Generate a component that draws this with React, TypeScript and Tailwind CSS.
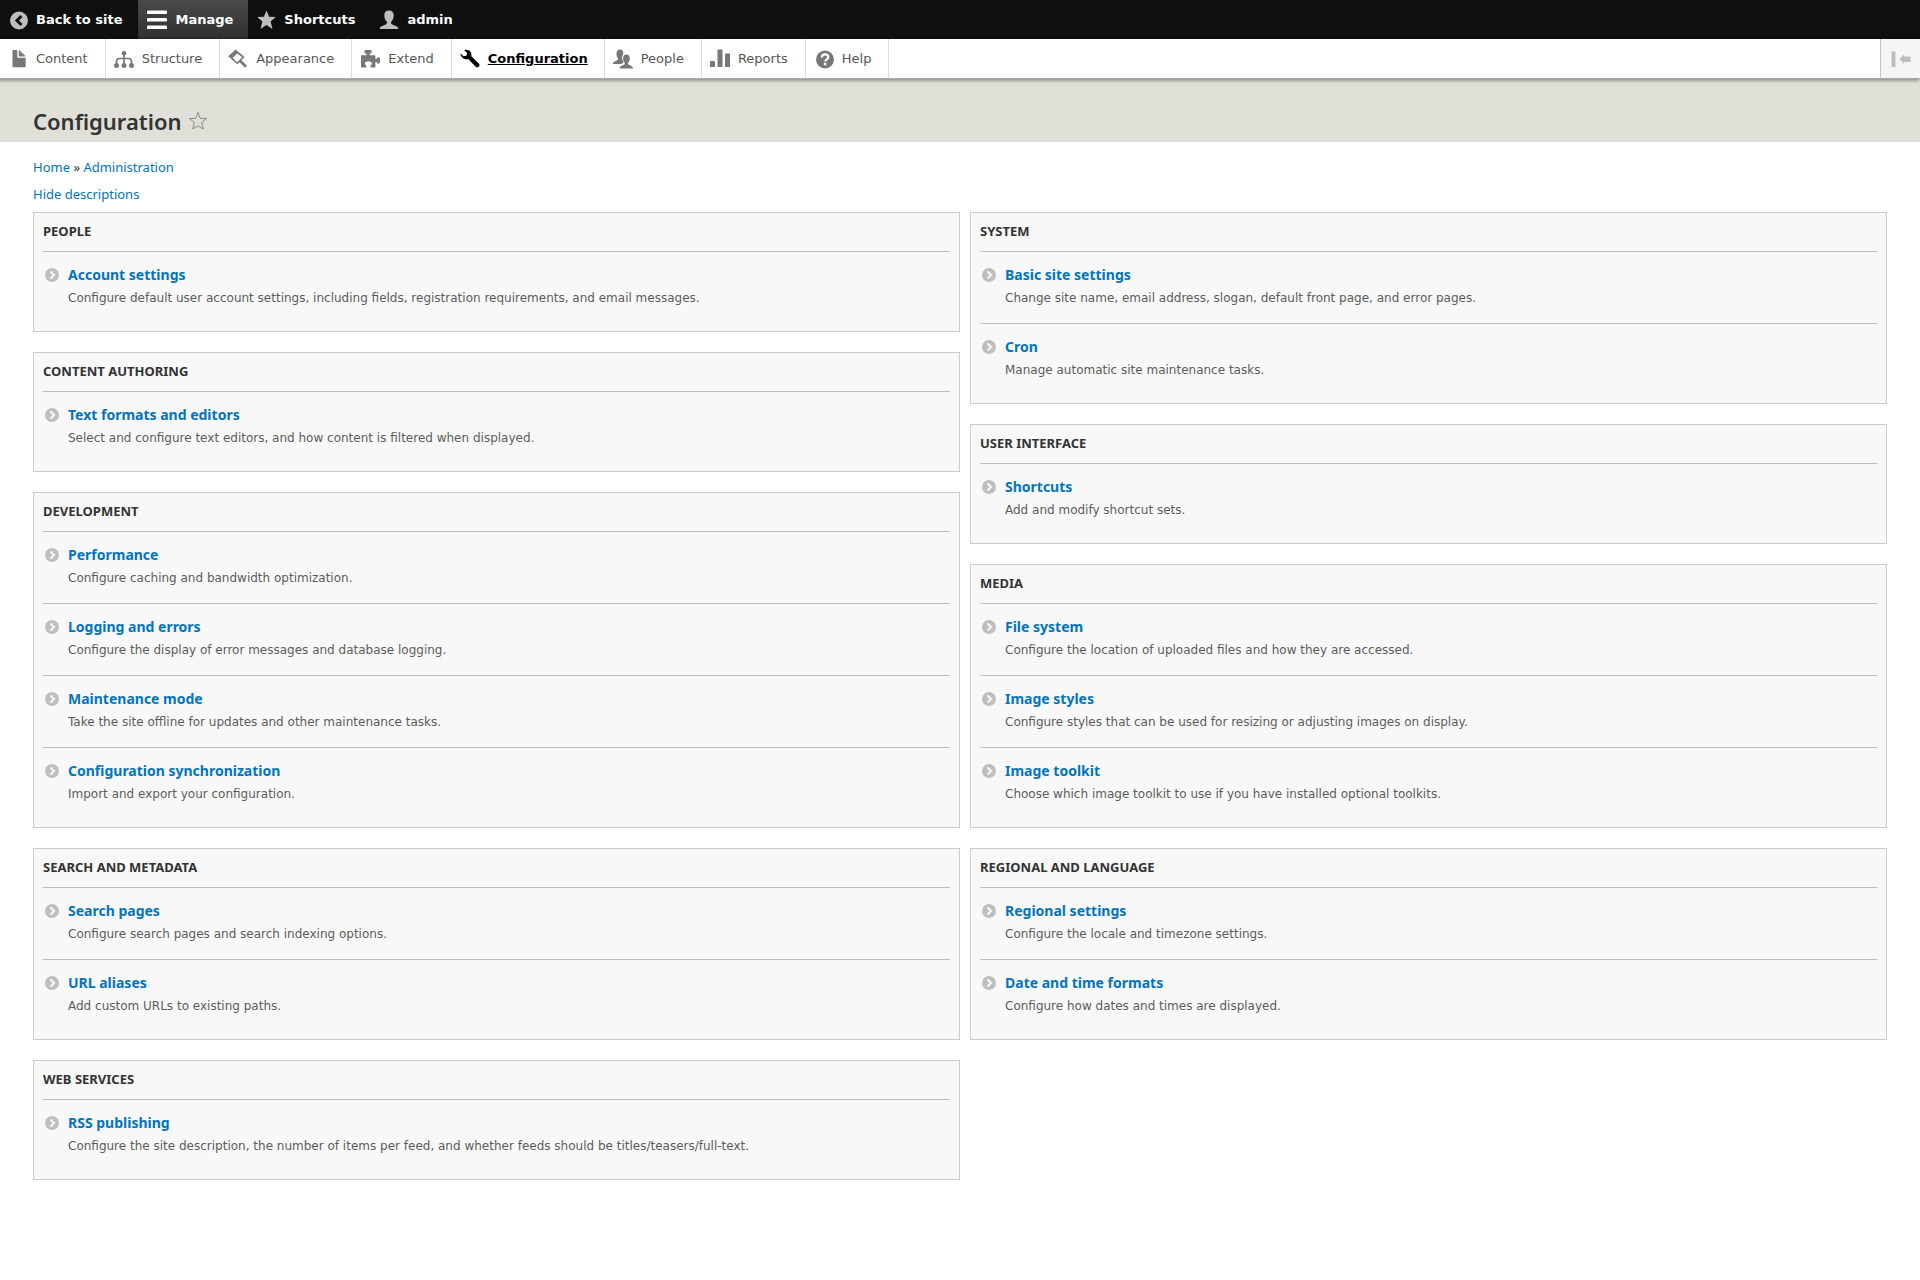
import type { ReactNode } from "react";

type Entry = { title: string; text: string };
type Group = { name: string; entries: Entry[] };

const leftGroups: Group[] = [
  {
    name: "People",
    entries: [
      {
        title: "Account settings",
        text: "Configure default user account settings, including fields, registration requirements, and email messages.",
      },
    ],
  },
  {
    name: "Content authoring",
    entries: [
      {
        title: "Text formats and editors",
        text: "Select and configure text editors, and how content is filtered when displayed.",
      },
    ],
  },
  {
    name: "Development",
    entries: [
      { title: "Performance", text: "Configure caching and bandwidth optimization." },
      { title: "Logging and errors", text: "Configure the display of error messages and database logging." },
      { title: "Maintenance mode", text: "Take the site offline for updates and other maintenance tasks." },
      { title: "Configuration synchronization", text: "Import and export your configuration." },
    ],
  },
  {
    name: "Search and metadata",
    entries: [
      { title: "Search pages", text: "Configure search pages and search indexing options." },
      { title: "URL aliases", text: "Add custom URLs to existing paths." },
    ],
  },
  {
    name: "Web services",
    entries: [
      {
        title: "RSS publishing",
        text: "Configure the site description, the number of items per feed, and whether feeds should be titles/teasers/full-text.",
      },
    ],
  },
];

const rightGroups: Group[] = [
  {
    name: "System",
    entries: [
      {
        title: "Basic site settings",
        text: "Change site name, email address, slogan, default front page, and error pages.",
      },
      { title: "Cron", text: "Manage automatic site maintenance tasks." },
    ],
  },
  {
    name: "User interface",
    entries: [{ title: "Shortcuts", text: "Add and modify shortcut sets." }],
  },
  {
    name: "Media",
    entries: [
      { title: "File system", text: "Configure the location of uploaded files and how they are accessed." },
      {
        title: "Image styles",
        text: "Configure styles that can be used for resizing or adjusting images on display.",
      },
      {
        title: "Image toolkit",
        text: "Choose which image toolkit to use if you have installed optional toolkits.",
      },
    ],
  },
  {
    name: "Regional and language",
    entries: [
      { title: "Regional settings", text: "Configure the locale and timezone settings." },
      { title: "Date and time formats", text: "Configure how dates and times are displayed." },
    ],
  },
];

function Icon({ children }: { children: ReactNode }) {
  return (
    <svg viewBox="0 0 20 20" className="size-5 shrink-0" fill="currentColor" aria-hidden="true">
      {children}
    </svg>
  );
}

const backIcon = (
  <Icon>
    <path
      fillRule="evenodd"
      d="M11 1.500a9 9 0 1 0 0 18a9 9 0 1 0 0-18zM12.400 4.900l2.100 2.100-3.500 3.500 3.500 3.500-2.100 2.100L6.800 10.500z"
    />
  </Icon>
);
const menuIcon = (
  <Icon>
    <rect x="0" y="0.500" width="20" height="3.600" rx="1.200" />
    <rect x="0" y="8" width="20" height="3.600" rx="1.200" />
    <rect x="0" y="15.500" width="20" height="3.600" rx="1.200" />
  </Icon>
);
const starIcon = (
  <Icon>
    <path d="M10.500.500l2.600 6.200 6.700.400-5.200 4.300 1.900 7.700-6-4.200-6.100 4.200 2-7.700L1.200 7.100l6.700-.400z" />
  </Icon>
);
const personIcon = (
  <Icon>
    <path d="M10 .500c3 0 4.700 1.900 4.700 4.900 0 2.500-1 5-2.400 6.100-.6 1.500-.2 2.500 1 3.100l4 1.700c1.200.500 1.900 1.500 1.900 2.700H.8c0-1.200.700-2.200 1.900-2.700l4-1.700c1.200-.6 1.600-1.600 1-3.100-1.400-1.100-2.400-3.600-2.400-6.100C5.300 2.400 7 .500 10 .500z" />
  </Icon>
);

const fileIcon = (
  <Icon>
    <path d="M17 8.700H10c-.4 0-.7-.3-.7-.7V1.700c0-.4-.3-.7-.7-.7H5.200c-.4 0-.7.300-.7.700v15.800c0 .4.300.7.700.7H17c.4 0 .7-.3.700-.7V9.400c0-.4-.3-.7-.7-.7z" />
    <path d="M11.400 7.500h5.800c.4 0 .5-.2.200-.5L11.300 1.200c-.3-.3-.5-.2-.5.200v5.500c0 .4.200.6.600.6z" />
  </Icon>
);
const structureIcon = (
  <Icon>
    <circle cx="10" cy="4.300" r="2.300" />
    <circle cx="2.500" cy="16.600" r="2.500" />
    <circle cx="10" cy="16.600" r="2.500" />
    <circle cx="17.500" cy="16.600" r="2.500" />
    <path
      d="M10 4v12M2.500 16v-3.500c0-2 1-3 3-3h9c2 0 3 1 3 3V16"
      fill="none"
      stroke="currentColor"
      strokeWidth="1.700"
    />
  </Icon>
);
const brushIcon = (
  <Icon>
    <path
      fillRule="evenodd"
      d="M7.600.500L16.600 8 13.400 11.200 19 16.800 17 18.800 11.600 13.300 9 15.200.200 7.200zM8.200 3.800L4 7.800 8.900 13.200 14.300 8.300z"
    />
    <path d="M7.600 1.500L9.800 4 4.800 8.700 1.200 7.300z" />
  </Icon>
);
const puzzleIcon = (
  <Icon>
    <path d="M1 6.200h5.500V4.500H5.200c-.5 0-.7-.3-.7-.8V1.800c0-.5.300-.8.8-.8h5.500c.5 0 .8.300.8.800v1.900c0 .5-.3.800-.8.800H9.700v1.700h5.100c.4 0 .6.300.6.700v3.200h1.200c.2-1.200.8-1.900 1.700-1.900 1 0 1.900 1.200 1.900 3.200s-.8 3.300-1.900 3.300c-.9 0-1.500-.7-1.700-1.800h-1.200v5c0 .4-.2.700-.6.700h-4.300v-2.200c1-.4 1.400-1 1.400-1.800 0-1.400-1.500-2.300-3.500-2.300s-3.500.9-3.500 2.300c0 .8.500 1.400 1.400 1.800v2.200H1.700c-.4 0-.7-.3-.7-.7z" />
  </Icon>
);
const wrenchIcon = (
  <Icon>
    <path d="M4.200 1.200C7 .2 10.300 1.300 11.200 4.200c.4 1.200.3 2.200.1 3.100l7.500 7.200c1 1 .9 2.200.100 3.100-.9 1-2.200 1.100-3.200.100L8.200 10.100c-1.100.400-2.300.400-3.500 0C2.200 9.300.400 7 .500 4.600L3.600 7.300 6.400 6.700 7.200 4z" />
  </Icon>
);
const peopleIcon = (
  <Icon>
    <path d="M7 .500c2.200 0 3.500 1.500 3.300 3.900-.1.600-.2 1-.4 1.400-1.300 1.600-1.200 4.700.3 6.700.3.800.1 1.300-.6 1.700l-1.500.7H0c0-1.200.5-2 1.600-2.500l2.600-1.100c.9-.5 1.100-1.200.7-2.200C3.900 8 3.500 6.200 3.500 4.500 3.600 2 4.800.500 7 .500z" />
    <path d="M13.400 5.500c2.300 0 3.500 1.600 3.400 4.100 0 1.700-.7 3.300-1.600 4.100-.4 1-.2 1.600.7 2.100l2.600 1.100c1.100.5 1.500 1.400 1.500 2.600H6.600c0-1.200.6-2.100 1.700-2.600l2.600-1.100c.9-.5 1.100-1.100.7-2.100-.9-.8-1.500-2.400-1.600-4.100 0-2.500 1.100-4.100 3.400-4.100z" />
  </Icon>
);
const reportsIcon = (
  <Icon>
    <rect x="0" y="12" width="5" height="6" rx="0.600" />
    <rect x="7.500" y="0.500" width="5" height="17.500" rx="0.600" />
    <rect x="15" y="4.500" width="5" height="13.500" rx="0.600" />
  </Icon>
);
const helpIcon = (
  <Icon>
    <circle cx="11" cy="10.500" r="9" />
    <path
      d="M7.900 8.500c0-2 1.300-3.200 3.200-3.200s3.200 1.200 3.200 2.800c0 2.200-3.100 2.300-3.100 4.400"
      fill="none"
      stroke="white"
      strokeWidth="2.200"
    />
    <rect x="9.900" y="13.900" width="2.500" height="2.400" fill="white" />
  </Icon>
);

const barTabs = [
  { label: "Back to site", icon: backIcon, active: false },
  { label: "Manage", icon: menuIcon, active: true },
  { label: "Shortcuts", icon: starIcon, active: false },
  { label: "admin", icon: personIcon, active: false },
];

const trayLinks = [
  { label: "Content", icon: fileIcon, active: false },
  { label: "Structure", icon: structureIcon, active: false },
  { label: "Appearance", icon: brushIcon, active: false },
  { label: "Extend", icon: puzzleIcon, active: false },
  { label: "Configuration", icon: wrenchIcon, active: true },
  { label: "People", icon: peopleIcon, active: false },
  { label: "Reports", icon: reportsIcon, active: false },
  { label: "Help", icon: helpIcon, active: false },
];

function AdminBar() {
  return (
    <nav aria-label="Administration toolbar" className="flex h-[39px] bg-[#0f0f0f] text-[13px] font-bold text-white">
      {barTabs.map((tab) => (
        <a
          key={tab.label}
          href="#"
          className={
            tab.active
              ? "flex items-center gap-2 bg-linear-to-b from-[#4a4a4a] to-[#303030] pr-[15px] pl-[9px]"
              : "flex items-center gap-2 pr-4 pl-2"
          }
        >
          <span className={tab.active ? "text-white" : "text-[#bebebe]"}>{tab.icon}</span>
          {tab.label}
        </a>
      ))}
    </nav>
  );
}

function Tray() {
  return (
    <nav
      aria-label="Administration menu"
      className="relative flex h-10 border-b border-[#aaaaaa] bg-white text-[13px] shadow-[-2px_1px_3px_1px_rgba(0,0,0,0.33)]"
    >
      {trayLinks.map((link) => (
        <a
          key={link.label}
          href="#"
          className={
            link.active
              ? "flex items-center gap-2 border-r border-[#dddddd] pr-4 pl-2 font-bold text-black underline"
              : "flex items-center gap-2 border-r border-[#dddddd] pr-[17px] pl-2 text-[#565656]"
          }
        >
          <span className={link.active ? "text-black" : "text-[#787878]"}>{link.icon}</span>
          {link.label}
        </a>
      ))}
      <button
        type="button"
        aria-label="Vertical orientation"
        className="ml-auto flex w-10 items-center justify-center border-l border-[#c4c4c4] bg-[#f5f5f5] text-[#bebebe]"
      >
        <Icon>
          <rect x="0.500" y="2.500" width="4" height="15.500" rx="0.500" />
          <path d="M8.500 10.300L13 5.500V7.500h6.500v5.500H13v2z" />
        </Icon>
      </button>
    </nav>
  );
}

function Panel({ group }: { group: Group }) {
  return (
    <section className="border border-[#cccccc] bg-[#f8f8f8] px-[9px] pb-2">
      <h3 className="pt-2 pb-[10px] text-[13px] leading-5 font-bold text-[#333333] uppercase">{group.name}</h3>
      <ul>
        {group.entries.map((entry) => (
          <li key={entry.title} className="border-t border-[#bfbfbf] pt-[10px] pb-[15px] pl-[25px]">
            <div className="mb-0.5 -ml-6 flex h-6 items-center gap-2">
              <svg viewBox="0 0 16 16" className="size-4 shrink-0" aria-hidden="true">
                <circle cx="8" cy="9" r="7" fill="#bebebe" />
                <path d="M6.500 5.500L10 9l-3.500 3.500" fill="none" stroke="#f8f8f8" strokeWidth="2.200" />
              </svg>
              <a href="#" className="text-[14px] font-bold text-[#0074bd]">
                {entry.title}
              </a>
            </div>
            <p className="font-['DejaVu_Sans',sans-serif] text-[12px] leading-5 text-[#5c5c5b]">{entry.text}</p>
          </li>
        ))}
      </ul>
    </section>
  );
}

export default function App() {
  return (
    <div className="min-h-screen bg-white font-['DejaVu_Sans',Verdana,sans-serif]">
      <AdminBar />
      <Tray />
      <header className="flex h-[63px] items-center gap-1.5 bg-[#e0e0d8] px-[33px] pt-5">
        <h1 className="font-['Noto_Sans',sans-serif] text-[22px] leading-6 font-semibold text-[#333333]">Configuration</h1>
        <button type="button" aria-label="Add to Default shortcuts">
          <svg viewBox="0 0 20 20" className="size-5" aria-hidden="true">
            <path
              d="M10 1.500l2.200 5.800 6.300.3-4.900 3.900 1.700 6.500L10 14.800 4.700 18l1.700-6.500L1.500 7.600l6.300-.3z"
              fill="none"
              stroke="#8c8c72"
              strokeWidth="1"
              strokeLinejoin="round"
            />
          </svg>
        </button>
      </header>
      <main className="px-[33px] pt-3 pb-10 font-['Noto_Sans',sans-serif] text-[13px] leading-[27px] text-[#333333]">
        <nav aria-label="Breadcrumb">
          <a href="#" className="text-[#0074bd]">
            Home
          </a>
          {" » "}
          <a href="#" className="text-[#0074bd]">
            Administration
          </a>
        </nav>
        <a href="#" className="block text-[#0074bd]">
          Hide descriptions
        </a>
        <div className="mt-1 grid grid-cols-2 items-start">
          <div className="flex flex-col gap-5">
            {leftGroups.map((group) => (
              <Panel key={group.name} group={group} />
            ))}
          </div>
          <div className="flex flex-col gap-5 pl-[10px]">
            {rightGroups.map((group) => (
              <Panel key={group.name} group={group} />
            ))}
          </div>
        </div>
      </main>
    </div>
  );
}
